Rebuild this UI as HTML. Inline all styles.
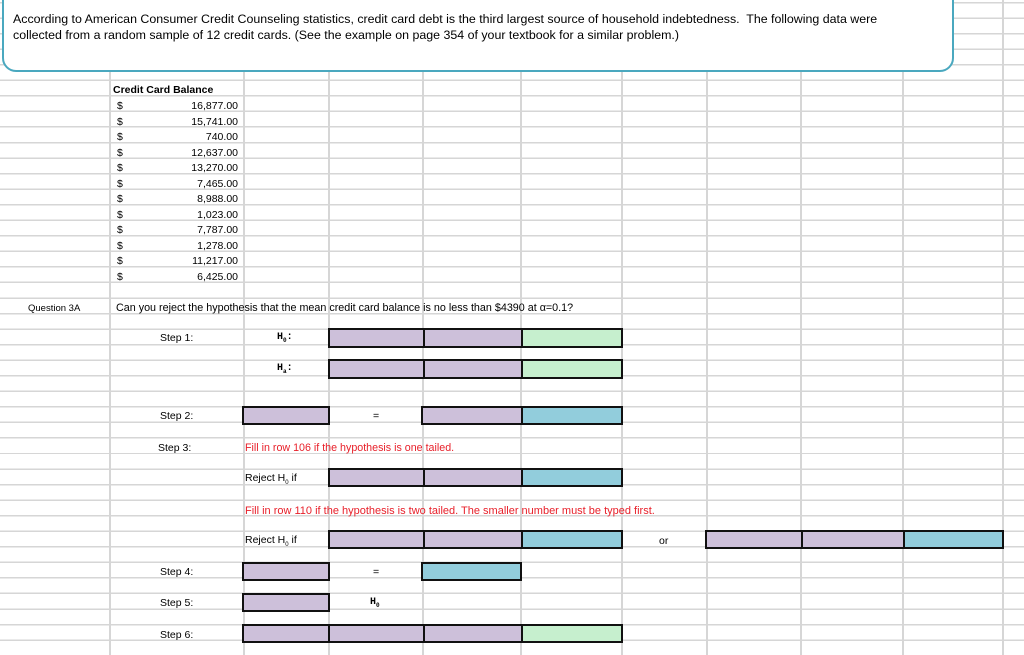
<!DOCTYPE html>
<html><head><meta charset="utf-8"><style>
body{margin:0;width:1024px;height:655px;overflow:hidden;background:#fff;font-family:"Liberation Sans",sans-serif;font-size:10.5px;color:#000;position:relative}
.g{position:absolute;left:0;top:0;width:1024px;height:655px;background:repeating-linear-gradient(to bottom,transparent 0,transparent 1.8px,#d6d6d6 1.8px,#d6d6d6 3.3px,transparent 3.3px,transparent 15.55px)}
.v{position:absolute;top:0;height:655px;width:2px;background:#d6d6d6}
.t{position:absolute;white-space:nowrap;line-height:12px}
.box{position:absolute;display:flex;border:2px solid #111;box-sizing:border-box}
.box div{height:100%;box-sizing:border-box;border-right:2px solid #111}
.box div:last-child{border-right:none}
.p{background:#cdc0da}.gr{background:#c6efce}.b{background:#92cddc}
.r{color:#e8202a}
.h{font-family:"Liberation Mono",monospace;font-weight:bold;font-size:10px}
</style></head><body>
<div class="g"></div>
<div class="v" style="left:109px"></div><div class="v" style="left:243px"></div><div class="v" style="left:328px"></div><div class="v" style="left:422px"></div><div class="v" style="left:520px"></div><div class="v" style="left:621px"></div><div class="v" style="left:706px"></div><div class="v" style="left:800px"></div><div class="v" style="left:902px"></div><div class="v" style="left:1002px"></div>
<div style="position:absolute;left:2px;top:-10px;width:952px;height:82px;background:#fff;border:2px solid #4aa8bf;border-radius:0 0 14px 14px;box-sizing:border-box"></div>
<div class="t" style="left:13px;top:11px;font-size:12.4px;line-height:16px">According to American Consumer Credit Counseling statistics, credit card debt is the third largest source of household indebtedness.&nbsp; The following data were<br>collected from a random sample of 12 credit cards. (See the example on page 354 of your textbook for a similar problem.)</div>
<div class="t" style="left:113px;top:84px;font-weight:bold">Credit Card Balance</div>
<div class="t" style="left:28px;top:303px;font-size:9.5px">Question 3A</div>
<div class="t" style="left:116px;top:302px;font-size:10.75px">Can you reject the hypothesis that the mean credit card balance is no less than $4390 at α=0.1?</div>
<div class="t" style="left:160px;top:332px">Step 1:</div>
<div class="t h" style="left:277px;top:332px">H<sub style="font-size:6px">0</sub>:</div>
<div class="t h" style="left:277px;top:363px">H<sub style="font-size:6px">a</sub>:</div>
<div class="t" style="left:160px;top:410px">Step 2:</div>
<div class="t" style="left:373px;top:410px">=</div>
<div class="t" style="left:158px;top:442px">Step 3:</div>
<div class="t r" style="left:245px;top:442px;font-size:10.7px">Fill in row 106 if the hypothesis is one tailed.</div>
<div class="t" style="left:245px;top:472px">Reject H<sub style="font-size:6px">0</sub> if</div>
<div class="t r" style="left:245px;top:505px;font-size:11px">Fill in row 110 if the hypothesis is two tailed. The smaller number must be typed first.</div>
<div class="t" style="left:245px;top:534px">Reject H<sub style="font-size:6px">0</sub> if</div>
<div class="t" style="left:659px;top:535px">or</div>
<div class="t" style="left:160px;top:566px">Step 4:</div>
<div class="t" style="left:373px;top:566px">=</div>
<div class="t" style="left:160px;top:597px">Step 5:</div>
<div class="t h" style="left:370px;top:597px">H<sub style="font-size:6px">0</sub></div>
<div class="t" style="left:160px;top:629px">Step 6:</div>

<div class="box" style="left:328px;top:328px;width:295px;height:20px"><div class="p" style="width:95px"></div><div class="p" style="width:98px"></div><div class="gr" style="flex:1"></div></div>
<div class="box" style="left:328px;top:359px;width:295px;height:20px"><div class="p" style="width:95px"></div><div class="p" style="width:98px"></div><div class="gr" style="flex:1"></div></div>
<div class="box" style="left:242px;top:406px;width:88px;height:19px"><div class="p" style="flex:1"></div></div>
<div class="box" style="left:421px;top:406px;width:202px;height:19px"><div class="p" style="width:100px"></div><div class="b" style="flex:1"></div></div>
<div class="box" style="left:328px;top:468px;width:295px;height:19px"><div class="p" style="width:95px"></div><div class="p" style="width:98px"></div><div class="b" style="flex:1"></div></div>
<div class="box" style="left:328px;top:530px;width:295px;height:19px"><div class="p" style="width:95px"></div><div class="p" style="width:98px"></div><div class="b" style="flex:1"></div></div>
<div class="box" style="left:705px;top:530px;width:299px;height:19px"><div class="p" style="width:96px"></div><div class="p" style="width:102px"></div><div class="b" style="flex:1"></div></div>
<div class="box" style="left:242px;top:562px;width:88px;height:19px"><div class="p" style="flex:1"></div></div>
<div class="box" style="left:421px;top:562px;width:101px;height:19px"><div class="b" style="flex:1"></div></div>
<div class="box" style="left:242px;top:593px;width:88px;height:19px"><div class="p" style="flex:1"></div></div>
<div class="box" style="left:242px;top:624px;width:381px;height:19px"><div class="p" style="width:86px"></div><div class="p" style="width:95px"></div><div class="p" style="width:98px"></div><div class="gr" style="flex:1"></div></div>

<div class="t" style="left:117px;top:99px;line-height:15.55px">$<br>$<br>$<br>$<br>$<br>$<br>$<br>$<br>$<br>$<br>$<br>$</div>
<div class="t" style="left:150px;width:88px;text-align:right;top:99px;line-height:15.55px">16,877.00<br>15,741.00<br>740.00<br>12,637.00<br>13,270.00<br>7,465.00<br>8,988.00<br>1,023.00<br>7,787.00<br>1,278.00<br>11,217.00<br>6,425.00</div>
</body></html>
